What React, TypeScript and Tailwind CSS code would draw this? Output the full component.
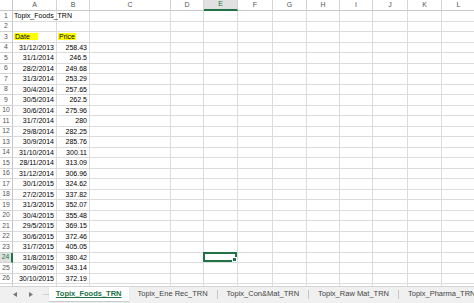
import React from 'react';

const COLS = [
  { id: 'A', w: 44 },
  { id: 'B', w: 33 },
  { id: 'C', w: 81 },
  { id: 'D', w: 33 },
  { id: 'E', w: 34 },
  { id: 'F', w: 35 },
  { id: 'G', w: 34 },
  { id: 'H', w: 33 },
  { id: 'I', w: 33 },
  { id: 'J', w: 35 },
  { id: 'K', w: 34 },
  { id: 'L', w: 34 },
];

const prices: [string, string][] = [
  ['31/12/2013', '258.43'],
  ['31/1/2014', '246.5'],
  ['28/2/2014', '249.68'],
  ['31/3/2014', '253.29'],
  ['30/4/2014', '257.65'],
  ['30/5/2014', '262.5'],
  ['30/6/2014', '275.96'],
  ['31/7/2014', '280'],
  ['29/8/2014', '282.25'],
  ['30/9/2014', '285.76'],
  ['31/10/2014', '300.11'],
  ['28/11/2014', '313.09'],
  ['31/12/2014', '306.96'],
  ['30/1/2015', '324.62'],
  ['27/2/2015', '337.82'],
  ['31/3/2015', '352.07'],
  ['30/4/2015', '355.48'],
  ['29/5/2015', '369.15'],
  ['30/6/2015', '372.46'],
  ['31/7/2015', '405.05'],
  ['31/8/2015', '380.42'],
  ['30/9/2015', '343.14'],
  ['30/10/2015', '372.19'],
];

const otherTabs = ['Topix_Ene Rec_TRN', 'Topix_Con&Mat_TRN', 'Topix_Raw Mat_TRN', 'Topix_Pharma_TRN'];

const font = { fontFamily: '"Liberation Sans", Arial, sans-serif' };

function cellContent(row: number, col: string) {
  if (row === 1 && col === 'A') return <span className="pl-[1px]">Topix_Foods_TRN</span>;
  if (row === 3 && col === 'A') return <span className="ml-[1px] bg-[#ffff00] pr-[8px] pl-[1px]">Date</span>;
  if (row === 3 && col === 'B') return <span className="ml-[1px] bg-[#ffff00] pr-[1px] pl-[1px]">Price</span>;
  if (row >= 4 && row <= 26) {
    const [d, p] = prices[row - 4];
    if (col === 'A') return <span className="block text-right pr-[2px]">{d}</span>;
    if (col === 'B') return <span className="block text-right pr-[2px]">{p}</span>;
  }
  return null;
}

export default function App() {
  // row 27 is only a sliver under the tab bar, so no number is drawn for it
  const rows = Array.from({ length: 27 }, (_, i) => i + 1);

  return (
    <div className="w-[474px] h-[303px] overflow-hidden bg-white flex flex-col" style={font}>
      {/* sheet grid */}
      <div className="flex-1 overflow-hidden">
        <div className="grid grid-cols-[13px_44px_33px_81px_33px_34px_35px_34px_33px_33px_35px_34px_34px] grid-rows-[11px_repeat(27,10.5px)] w-[476px]">
          <div className="border-r border-b border-[#c8c8c8] bg-white" />
          {COLS.map((c) => (
            <div
              key={c.id}
              className={`flex items-center justify-center text-[7px] border-r border-[#d4d4d4] ${
                c.id === 'E'
                  ? 'bg-[#e1e1e1] text-[#217346] border-b-2 border-b-[#217346]'
                  : 'bg-white text-[#555] border-b border-b-[#c8c8c8]'
              }`}
            >
              {c.id}
            </div>
          ))}

          {rows.map((r) => (
            <React.Fragment key={r}>
              <div
                className={`flex items-center justify-center text-[6.8px] border-b border-[#d4d4d4] ${
                  r === 24
                    ? 'bg-[#e1e1e1] text-[#217346] border-r-2 border-r-[#217346]'
                    : 'bg-white text-[#555] border-r border-r-[#c8c8c8]'
                }`}
              >
                {r < 27 ? r : null}
              </div>
              {COLS.map((c) => (
                <div
                  key={c.id}
                  className="relative border-r border-b border-[#dcdcdc] text-[7px] leading-[10px] text-[#000] whitespace-nowrap"
                >
                  {cellContent(r, c.id)}
                  {r === 24 && c.id === 'E' && (
                    <div className="absolute -left-[1px] -top-[1px] right-0 bottom-0 border-2 border-[#217346]">
                      <div className="absolute -right-[2px] -bottom-[2px] w-[3px] h-[3px] bg-[#217346] border border-white box-content" />
                    </div>
                  )}
                </div>
              ))}
            </React.Fragment>
          ))}
        </div>
      </div>

      {/* sheet tabs */}
      <div className="h-[17px] shrink-0 bg-[#f0f0f0] border-t border-[#d4d4d4] flex items-start text-[7.5px] text-[#444] whitespace-nowrap">
        <div className="w-[53px] h-[14px] flex items-center pl-[13px] text-[#777]">
          <svg width="4" height="5" viewBox="0 0 4 5" className="fill-[#777]">
            <polygon points="4,0 4,5 0,2.5" />
          </svg>
          <svg width="4" height="5" viewBox="0 0 4 5" className="ml-[12px] fill-[#777]">
            <polygon points="0,0 0,5 4,2.5" />
          </svg>
          <span className="ml-[10px] text-[7px] -mt-[2px]">...</span>
        </div>
        <div className="h-[14px] bg-white px-[7px] flex items-center font-bold text-[#217346] shadow-[0_1px_1px_rgba(0,0,0,0.15)]">
          <span className="underline underline-offset-[1px]">Topix_Foods_TRN</span>
        </div>
        {otherTabs.map((t) => (
          <div key={t} className="h-[14px] flex items-center">
            <span className="px-[9px]">{t}</span>
            <span className="w-px h-[9px] bg-[#c6c6c6]" />
          </div>
        ))}
      </div>
    </div>
  );
}
